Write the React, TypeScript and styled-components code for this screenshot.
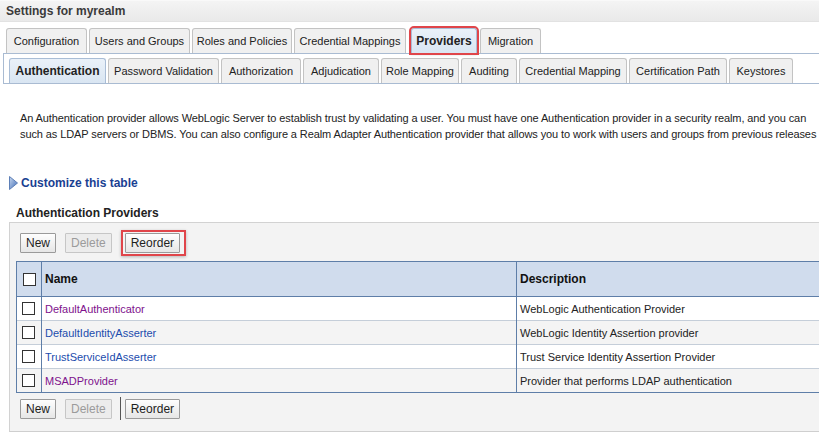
import React from "react";
import styled, { createGlobalStyle } from "styled-components";

const Global = createGlobalStyle`
  html, body { margin: 0; padding: 0; background: #fff; }
  body {
    font-family: "Liberation Sans", Arial, sans-serif;
    font-size: 11px;
    color: #222;
    overflow: hidden;
  }
  * { box-sizing: border-box; }
`;

const Page = styled.div`
  width: 819px;
  height: 441px;
  overflow: hidden;
  background: #fff;
`;

const TitleBar = styled.div`
  height: 22px;
  display: flex;
  align-items: center;
  padding-left: 6px;
  background: linear-gradient(to bottom, #f4f4f4 0%, #e9e9e9 100%);
  border-top: 1px solid #f9f9f9;
  border-bottom: 1px solid #e2e2e2;
  font-size: 12px;
  font-weight: bold;
  color: #3a3a3a;
`;

const TopTabs = styled.div`
  display: flex;
  gap: 2px;
  margin-top: 5px;
  padding-left: 6px;
  height: 26px;
  align-items: flex-end;
`;

const Tab = styled.div<{ $w: number; $active?: boolean; $mark?: boolean; $ml?: number }>`
  width: ${(p) => p.$w}px;
  height: 25px;
  margin-left: ${(p) => p.$ml ?? 0}px;
  display: flex;
  align-items: center;
  justify-content: center;
  white-space: nowrap;
  font-size: ${(p) => (p.$active ? 12 : 11)}px;
  font-weight: ${(p) => (p.$active ? "bold" : "normal")};
  color: #222;
  background: ${(p) =>
    p.$active ? "linear-gradient(to bottom, #eaf1f9, #d9e5f2)" : "#f0f0f0"};
  border: 1px solid ${(p) => (p.$active ? "#a9bdd6" : "#c3c3c3")};
  border-bottom: none;
  border-radius: 3px 3px 0 0;
  ${(p) =>
    p.$mark
      ? `outline: 2px solid #e0454a; outline-offset: 0px; box-shadow: 0 1px 3px rgba(0,0,0,0.35);`
      : ""}
`;

const SubBar = styled.div`
  margin-left: 3px;
  border-top: 1px solid #a9bbd2;
  border-left: 1px solid #a9bbd2;
  border-bottom: 1px solid #a9bbd2;
  padding: 4px 0 0 5px;
  display: flex;
  gap: 2px;
`;

const Description = styled.div`
  margin-top: 26px;
  padding-left: 20px;
  line-height: 16px;
  font-size: 11px;
  letter-spacing: -0.1px;
  color: #222;
  white-space: nowrap;
`;

const Customize = styled.div`
  margin-top: 33px;
  display: flex;
  align-items: center;
  gap: 3px;
  padding-left: 9px;
  height: 16px;
  font-size: 12px;
  font-weight: bold;
  color: #1a3f92;
`;

const SectionTitle = styled.div`
  margin-top: 14px;
  padding-left: 16px;
  line-height: 16px;
  font-size: 12px;
  font-weight: bold;
  color: #222;
`;

const Panel = styled.div`
  margin: 1px 0 0 9px;
  width: 900px;
  background: #f3f3f3;
  border-top: 1px solid #d2d2d2;
  border-left: 1px solid #d2d2d2;
  border-bottom: 1px solid #cfcfcf;
  padding: 7px 0 11px 6px;
`;

const ButtonRow = styled.div<{ $mt?: number }>`
  display: flex;
  align-items: center;
  padding-left: 4px;
  margin-top: ${(p) => p.$mt ?? 0}px;
`;

const Button = styled.button<{ $disabled?: boolean; $ml?: number }>`
  height: 20px;
  margin: 0 0 0 ${(p) => p.$ml ?? 0}px;
  padding: 0 5px;
  font-family: "Liberation Sans", Arial, sans-serif;
  font-size: 12px;
  color: ${(p) => (p.$disabled ? "#9b9b9b" : "#1e1e1e")};
  border: 1px solid ${(p) => (p.$disabled ? "#c6c6c6" : "#9a9a9a")};
  border-radius: 1px;
  background: ${(p) =>
    p.$disabled ? "#ececec" : "linear-gradient(to bottom, #fefefe, #e6e6e6)"};
  cursor: default;
`;

const Highlight = styled.div<{ $ml: number }>`
  margin-left: ${(p) => p.$ml}px;
  border: 2px solid #e0454a;
  padding: 1px 4px 1px 2px;
  display: flex;
  box-shadow: 0 1px 3px rgba(0, 0, 0, 0.25);
`;

const Separator = styled.div`
  width: 1px;
  height: 23px;
  background: #555;
  margin: 0 4px 0 8px;
`;

const Table = styled.table`
  margin-top: 5px;
  border-collapse: collapse;
  width: 880px;
  table-layout: fixed;
  border: 1px solid #5e7ea8;
`;

const HeadCell = styled.th<{ $w?: number }>`
  ${(p) => (p.$w ? `width: ${p.$w}px;` : "")}
  height: 35px;
  background: #d0dced;
  border: 1px solid #5e7ea8;
  padding: 0 0 0 3px;
  text-align: left;
  font-size: 12px;
  font-weight: bold;
  color: #111;
`;

const Row = styled.tr<{ $alt: boolean }>`
  background: ${(p) => (p.$alt ? "#f4f4f4" : "#ffffff")};
`;

const Cell = styled.td`
  height: 24px;
  padding: 0 0 0 3px;
  border-top: 1px solid #c5ced9;
  border-left: 1px solid #5e7ea8;
  border-right: 1px solid #5e7ea8;
  font-size: 11px;
  color: #222;
  white-space: nowrap;
`;

const CheckCell = styled(Cell)`
  padding: 0 0 0 5px;
`;

const Check = styled.span`
  display: block;
  width: 13px;
  height: 13px;
  border: 1px solid #333;
  background: #fff;
`;

const HeadCheck = styled(Check)`
  margin-left: 3px;
`;

const Link = styled.a<{ $visited: boolean }>`
  color: ${(p) => (p.$visited ? "#7e118c" : "#1c4cad")};
  text-decoration: none;
`;

const Arrow = () => (
  <svg width="9" height="14" viewBox="0 0 9 14">
    <defs>
      <linearGradient id="ag" x1="0" y1="0" x2="1" y2="1">
        <stop offset="0" stopColor="#c9d9f0" />
        <stop offset="1" stopColor="#3f6cb6" />
      </linearGradient>
    </defs>
    <polygon points="0.5,0.5 8.5,7 0.5,13.5" fill="url(#ag)" stroke="#5d7fb7" strokeWidth="1" />
  </svg>
);

const topTabs = [
  { label: "Configuration", w: 81 },
  { label: "Users and Groups", w: 101 },
  { label: "Roles and Policies", w: 100 },
  { label: "Credential Mappings", w: 112 },
  { label: "Providers", w: 66, active: true, mark: true, ml: 3 },
  { label: "Migration", w: 61, ml: 1 },
];

const subTabs = [
  { label: "Authentication", w: 97, active: true },
  { label: "Password Validation", w: 111 },
  { label: "Authorization", w: 80 },
  { label: "Adjudication", w: 76 },
  { label: "Role Mapping", w: 78 },
  { label: "Auditing", w: 56 },
  { label: "Credential Mapping", w: 108 },
  { label: "Certification Path", w: 98 },
  { label: "Keystores", w: 64 },
];

const providers = [
  { name: "DefaultAuthenticator", desc: "WebLogic Authentication Provider", visited: true },
  { name: "DefaultIdentityAsserter", desc: "WebLogic Identity Assertion provider", visited: false },
  { name: "TrustServiceIdAsserter", desc: "Trust Service Identity Assertion Provider", visited: false },
  { name: "MSADProvider", desc: "Provider that performs LDAP authentication", visited: true },
];

export default function App() {
  return (
    <Page>
      <Global />
      <TitleBar>Settings for myrealm</TitleBar>
      <TopTabs>
        {topTabs.map((t) => (
          <Tab key={t.label} $w={t.w} $active={t.active} $mark={t.mark} $ml={t.ml}>
            {t.label}
          </Tab>
        ))}
      </TopTabs>
      <SubBar>
        {subTabs.map((t) => (
          <Tab key={t.label} $w={t.w} $active={t.active}>
            {t.label}
          </Tab>
        ))}
      </SubBar>
      <Description>
        <div>
          An Authentication provider allows WebLogic Server to establish trust by validating a user. You must have one Authentication provider in a security realm, and you can
        </div>
        <div>
          such as LDAP servers or DBMS. You can also configure a Realm Adapter Authentication provider that allows you to work with users and groups from previous releases
        </div>
      </Description>
      <Customize>
        <Arrow />
        <span>Customize this table</span>
      </Customize>
      <SectionTitle>Authentication Providers</SectionTitle>
      <Panel>
        <ButtonRow>
          <Button>New</Button>
          <Button $disabled $ml={9}>Delete</Button>
          <Highlight $ml={9}>
            <Button>Reorder</Button>
          </Highlight>
        </ButtonRow>
        <Table>
          <thead>
            <tr>
              <HeadCell $w={25}>
                <HeadCheck />
              </HeadCell>
              <HeadCell $w={475}>Name</HeadCell>
              <HeadCell>Description</HeadCell>
            </tr>
          </thead>
          <tbody>
            {providers.map((p, i) => (
              <Row key={p.name} $alt={i % 2 === 1}>
                <CheckCell>
                  <Check />
                </CheckCell>
                <Cell>
                  <Link href="#" $visited={p.visited}>
                    {p.name}
                  </Link>
                </Cell>
                <Cell>{p.desc}</Cell>
              </Row>
            ))}
          </tbody>
        </Table>
        <ButtonRow $mt={4}>
          <Button>New</Button>
          <Button $disabled $ml={9}>Delete</Button>
          <Separator />
          <Button>Reorder</Button>
        </ButtonRow>
      </Panel>
    </Page>
  );
}
